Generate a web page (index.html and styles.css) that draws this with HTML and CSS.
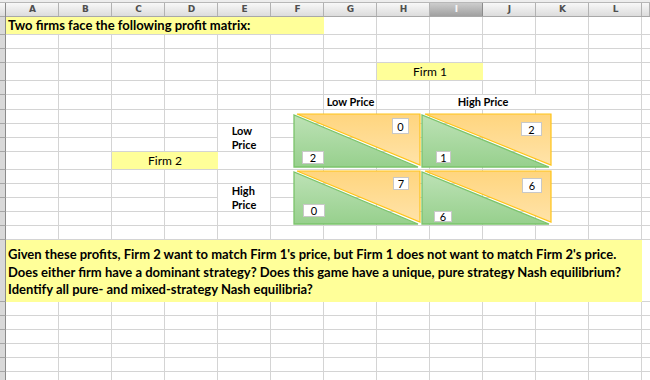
FILE: index.html
```html
<!DOCTYPE html>
<html>
<head>
<meta charset="utf-8">
<link rel="stylesheet" href="styles.css">
</head>
<body>
<div class="sheet">
  <div class="colheads">
    <div class="corner"></div>
    <div class="ch">A</div><div class="ch">B</div><div class="ch">C</div><div class="ch">D</div>
    <div class="ch">E</div><div class="ch">F</div><div class="ch">G</div><div class="ch">H</div>
    <div class="ch sel">I</div><div class="ch">J</div><div class="ch">K</div><div class="ch">L</div>
    <div class="ch"></div>
  </div>

  <div class="row h18"><div class="rh"></div><div class="c yel title">Two firms face the following profit matrix:</div></div>
  <div class="row"><div class="rh"></div></div>
  <div class="row"><div class="rh"></div></div>
  <div class="row h18"><div class="rh"></div><div class="c yel firm firm1">Firm 1</div></div>
  <div class="row"><div class="rh"></div></div>
  <div class="row h15"><div class="rh"></div><div class="c lbl colG">Low Price</div><div class="c lbl colIJ">High Price</div></div>
  <div class="row"><div class="rh"></div></div>
  <div class="row pair"><div class="rh"></div><div class="rh"></div><div class="mlab">Low<br>Price</div></div>
  <div class="row h18"><div class="rh"></div><div class="c yel firm firm2">Firm 2</div></div>
  <div class="row"><div class="rh"></div></div>
  <div class="row pair"><div class="rh"></div><div class="rh"></div><div class="mlab">High<br>Price</div></div>
  <div class="row"><div class="rh"></div></div>
  <div class="row"><div class="rh"></div></div>
  <div class="row block"><div class="rh"></div><div class="c yel para">Given these profits, Firm 2 want to match Firm 1's price, but Firm 1 does not want to match Firm 2's price.<br>Does either firm have a dominant strategy? Does this game have a unique, pure strategy Nash equilibrium?<br>Identify all pure- and mixed-strategy Nash equilibria?</div></div>
  <div class="row"><div class="rh"></div></div>
  <div class="row"><div class="rh"></div></div>
  <div class="row"><div class="rh"></div></div>
  <div class="row"><div class="rh"></div></div>
  <div class="row"><div class="rh"></div></div>
  <div class="row"><div class="rh"></div></div>

  <div class="matrix">
    <div class="mc tl">
      <svg class="shape" viewBox="0 0 128 55" width="128" height="55">
        <defs>
          <linearGradient id="gg" x1="0" y1="0" x2="0" y2="1">
            <stop offset="0" stop-color="#bde2b6"/>
            <stop offset="1" stop-color="#97d08d"/>
          </linearGradient>
          <linearGradient id="go" x1="0" y1="0" x2="0" y2="1">
            <stop offset="0" stop-color="#ffd57e"/>
            <stop offset="1" stop-color="#ffe3a9"/>
          </linearGradient>
        </defs>
        <polygon class="tri-g" points="1,2 1,54 125,54"/>
        <polygon class="tri-o" points="4,1 127,1 127,52"/>
      </svg>
      <div class="nb n1">0</div>
      <div class="nb n2">2</div>
    </div>
    <div class="mc tr">
      <svg class="shape" viewBox="0 0 131 55" width="131" height="55">
        <polygon class="tri-g" points="1,2 1,54 128,54"/>
        <polygon class="tri-o" points="4,1 130,1 130,52"/>
      </svg>
      <div class="nb n1">2</div>
      <div class="nb n2">1</div>
    </div>
    <div class="mc bl">
      <svg class="shape" viewBox="0 0 128 55" width="128" height="55">
        <polygon class="tri-g" points="1,2 1,54 125,54"/>
        <polygon class="tri-o" points="4,1 127,1 127,52"/>
      </svg>
      <div class="nb n1">7</div>
      <div class="nb n2">0</div>
    </div>
    <div class="mc br">
      <svg class="shape" viewBox="0 0 131 55" width="131" height="55">
        <polygon class="tri-g" points="1,2 1,54 128,54"/>
        <polygon class="tri-o" points="4,1 130,1 130,52"/>
      </svg>
      <div class="nb n1">6</div>
      <div class="nb n2">6</div>
    </div>
  </div>
</div>
</body>
</html>
```

FILE: styles.css
```css
html, body {
  margin: 0;
  padding: 0;
  background: #ffffff;
}

body {
  width: 650px;
  height: 380px;
  overflow: hidden;
  font-family: Lato, "Liberation Sans", sans-serif;
}

.sheet {
  position: relative;
  width: 650px;
}

/* column header bar */
.colheads {
  display: grid;
  grid-template-columns: 6px repeat(12, 53px) 1fr;
  height: 17px;
  background: linear-gradient(#ededed 0 2px, #b7b7b7 2px 3px, #f8f8f8 3px, #dcdcdc 16px, #a8a8a8 16px 17px);
}

.corner {
  background: linear-gradient(to left, #8a8a8a 1px, transparent 1px) 0 3px / 100% 14px no-repeat;
}

.ch {
  box-sizing: border-box;
  padding-top: 4px;
  font: bold 9px/10px "DejaVu Sans", sans-serif;
  color: #4f4f4f;
  text-align: center;
  background: linear-gradient(to left, #b2b2b2 1px, transparent 1px) 0 3px / 100% 13px no-repeat;
}

.ch.sel {
  color: #f6f6f6;
  background:
    linear-gradient(to left, #8c8c8c 1px, transparent 1px) 0 3px / 100% 13px no-repeat,
    linear-gradient(#cdcdcd, #a0a0a0) 0 3px / 100% 13px no-repeat;
}

/* sheet rows */
.row {
  display: grid;
  grid-template-columns: 6px repeat(12, 53px) 1fr;
  grid-template-rows: 1fr;
  height: 14px;
  background-image:
    linear-gradient(to top, #d4d4d4 1px, transparent 1px),
    repeating-linear-gradient(to right, transparent 0 52px, #d4d4d4 52px 53px);
  background-position: 0 0, 6px 0;
  background-size: 100% 100%, 100% 100%;
}

.row.h18 { height: 18px; }
.row.h15 { height: 15px; }

.row.pair {
  height: 28px;
  grid-template-rows: 1fr 1fr;
  background-size: 100% 14px, 100% 100%;
}

.row.block { height: 62px; }

.rh {
  grid-column: 1;
  box-sizing: border-box;
  background: #d9d9d9;
  border-right: 1px solid #8b8b8b;
  border-bottom: 1px solid #a6a6a6;
}

.c {
  grid-row: 1;
  padding: 0 2px;
  white-space: nowrap;
  color: #000;
  font-size: 12px;
  line-height: 17px;
}

.yel {
  background: #ffff99;
  margin-bottom: 1px;
}

.title {
  grid-column: 2 / 8;
  font-weight: bold;
  font-size: 13px;
  line-height: 16px;
}

.firm {
  text-align: center;
  line-height: 17px;
}

.firm1 { grid-column: 9 / 11; }
.firm2 { grid-column: 4 / 6; }

.lbl {
  font-weight: bold;
  font-size: 11px;
  line-height: 14px;
  text-align: center;
}

.colG { grid-column: 8; }
.colIJ {
  grid-column: 10 / 12;
  background: #fff;
  margin-bottom: 1px;
}

.mlab {
  grid-column: 6;
  grid-row: 1 / 3;
  box-sizing: border-box;
  background: #fff;
  border-right: 1px solid #d4d4d4;
  border-bottom: 1px solid #d4d4d4;
  display: flex;
  flex-direction: column;
  justify-content: center;
  align-items: center;
  font-weight: bold;
  font-size: 11px;
  line-height: 14px;
  color: #000;
}

.para {
  grid-column: 2 / 14;
  margin-bottom: 0;
  padding-top: 6px;
  font-weight: bold;
  font-size: 13px;
  line-height: 17.5px;
}

/* floating payoff matrix shapes */
.matrix {
  position: absolute;
  left: 293px;
  top: 113px;
  display: grid;
  grid-template-columns: 128px 131px;
  grid-template-rows: 55px 55px;
  row-gap: 2px;
}

.mc {
  position: relative;
}

.shape {
  display: block;
}

.tri-g {
  fill: url(#gg);
  stroke: #7bc46b;
  stroke-width: 1.3;
}

.tri-o {
  fill: url(#go);
  stroke: #ffc418;
  stroke-width: 1.2;
}

.nb {
  position: absolute;
  box-sizing: border-box;
  display: flex;
  align-items: center;
  justify-content: center;
  background: #fff;
  border: 1px solid #c8c8c8;
  font-size: 11px;
  line-height: 1;
  color: #000;
}

.tl .n1 { left: 99px;  top: 5px;  width: 17px; height: 16px; }
.tl .n2 { left: 9px;   top: 38px; width: 22px; height: 13px; }
.tr .n1 { left: 100px; top: 9px;  width: 21px; height: 14px; }
.tr .n2 { left: 15px;  top: 38px; width: 15px; height: 12px; }
.bl .n1 { left: 100px; top: 7px;  width: 16px; height: 13px; }
.bl .n2 { left: 10px;  top: 34px; width: 22px; height: 13px; }
.br .n1 { left: 101px; top: 8px;  width: 20px; height: 15px; }
.br .n2 { left: 13px;  top: 41px; width: 18px; height: 11px; }
```
